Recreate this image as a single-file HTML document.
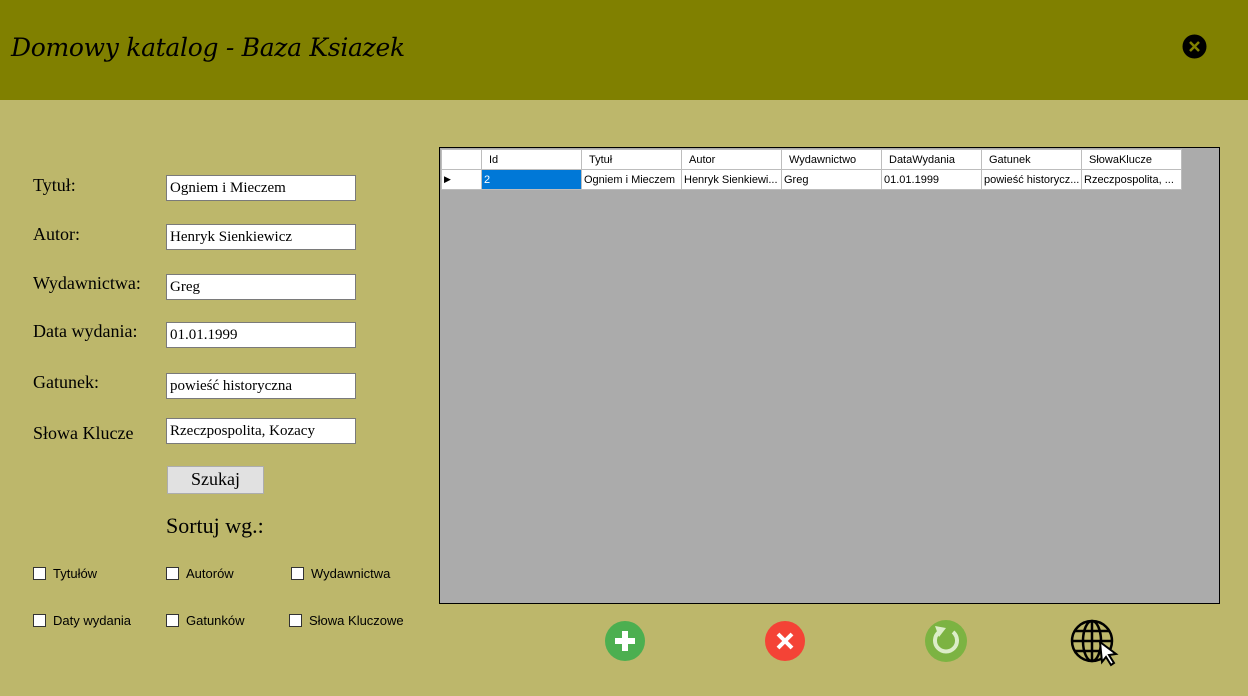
<!DOCTYPE html>
<html><head><meta charset="utf-8"><style>
*{margin:0;padding:0;box-sizing:border-box}
body{width:1248px;height:696px;background:#BDB76B;position:relative;overflow:hidden;font-family:"Liberation Serif",serif}
.hdr{position:absolute;left:0;top:0;width:1248px;height:100px;background:#808000}
.title{position:absolute;left:11px;top:33px;font-family:"DejaVu Serif",cursive;font-style:italic;font-size:25px;color:#000;letter-spacing:-0.3px}
.lbl{position:absolute;left:33px;font-size:18px;color:#000}
.inp{position:absolute;left:166px;width:190px;height:26px;background:#fff;border:1px solid #7a7a7a;font-size:15px;padding:4px 0 0 3px;color:#000}
.btn{position:absolute;left:167px;top:466px;width:97px;height:28px;background:#e1e1e1;border:1px solid #adadad;font-size:18px;text-align:center;line-height:25px}
.sort{position:absolute;left:166px;top:513px;font-size:22px}
.cb{position:absolute;font-family:"Liberation Sans",sans-serif;font-size:13px;color:#000;white-space:nowrap}
.cb i{display:inline-block;width:13px;height:13px;background:#fff;border:1px solid #333;vertical-align:-2px;margin-right:7px}
.grid{position:absolute;left:439px;top:147px;width:781px;height:457px;background:#ababab;border:1px solid #000}
table{position:absolute;left:1px;top:1px;border-collapse:collapse;table-layout:fixed;width:740px;font-family:"Liberation Sans",sans-serif;font-size:11px}
td{height:20px;width:100px;background:#fff;border:1px solid #bdbdbd;padding:0 2px;white-space:nowrap;overflow:hidden}
tr.h td{padding-left:7px}
td.rh{width:40px}
</style></head><body>
<div class="hdr"><div class="title">Domowy katalog - Baza Ksiazek</div>
<svg style="position:absolute;left:1182px;top:34px" width="25" height="25"><circle cx="12.5" cy="12.5" r="12" fill="#000"/><path d="M8 8L17 17M17 8L8 17" stroke="#808000" stroke-width="2.5"/></svg></div>

<div class="lbl" style="top:175px">Tytuł:</div>
<div class="lbl" style="top:224px">Autor:</div>
<div class="lbl" style="top:273px">Wydawnictwa:</div>
<div class="lbl" style="top:321px">Data wydania:</div>
<div class="lbl" style="top:372px">Gatunek:</div>
<div class="lbl" style="top:423px">Słowa Klucze</div>

<div class="inp" style="top:175px">Ogniem i Mieczem</div>
<div class="inp" style="top:224px">Henryk Sienkiewicz</div>
<div class="inp" style="top:274px">Greg</div>
<div class="inp" style="top:322px">01.01.1999</div>
<div class="inp" style="top:373px">powieść historyczna</div>
<div class="inp" style="top:418px">Rzeczpospolita, Kozacy</div>
<div class="btn">Szukaj</div>
<div class="sort">Sortuj wg.:</div>

<div class="cb" style="left:33px;top:566px"><i></i>Tytułów</div>
<div class="cb" style="left:166px;top:566px"><i></i>Autorów</div>
<div class="cb" style="left:291px;top:566px"><i></i>Wydawnictwa</div>
<div class="cb" style="left:33px;top:613px"><i></i>Daty wydania</div>
<div class="cb" style="left:166px;top:613px"><i></i>Gatunków</div>
<div class="cb" style="left:289px;top:613px"><i></i>Słowa Kluczowe</div>

<div class="grid"><table>
<tr class="h"><td class="rh"></td><td>Id</td><td>Tytuł</td><td>Autor</td><td>Wydawnictwo</td><td>DataWydania</td><td>Gatunek</td><td>SłowaKlucze</td></tr>
<tr><td class="rh" style="font-size:9px">&#9654;</td><td style="background:#0078d7;color:#fff">2</td><td>Ogniem i Mieczem</td><td>Henryk Sienkiewi...</td><td>Greg</td><td>01.01.1999</td><td>powieść historycz...</td><td>Rzeczpospolita, ...</td></tr>
</table></div>

<svg style="position:absolute;left:0;top:0" width="1248" height="696">
<circle cx="625" cy="641" r="20" fill="#4caf50"/><path d="M625 631V651M615 641H635" stroke="#fff" stroke-width="6"/>
<circle cx="785" cy="641" r="20" fill="#f44336"/><path d="M778 634L792 648M792 634L778 648" stroke="#fff" stroke-width="4"/>
<circle cx="946" cy="641" r="21" fill="#7cb342"/><path d="M953 632A11 11 0 1 1 939 632" fill="none" stroke="#dcedc8" stroke-width="4"/><path d="M935 626L946 628L939 637Z" fill="#dcedc8"/>
<g fill="none" stroke="#000" stroke-width="2.5"><circle cx="1092" cy="641" r="20"/><ellipse cx="1092" cy="641" rx="9" ry="20"/><path d="M1092 621V661M1072 641H1112M1075 631H1109M1075 651H1109"/></g>
<path d="M1100 642L1102 662L1106 657L1111 665L1114 663L1109 655L1116 654Z" fill="#fff" stroke="#000" stroke-width="2"/>
</svg>
</body></html>
